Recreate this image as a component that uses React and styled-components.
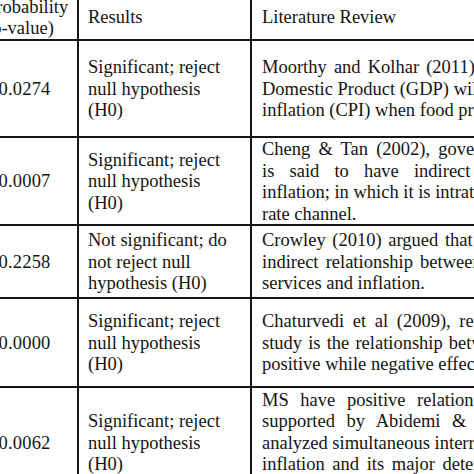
import styled, { createGlobalStyle } from "styled-components";

const Global = createGlobalStyle`
  html, body {
    margin: 0;
    padding: 0;
    background: #ffffff;
    overflow: hidden;
  }
  body {
    width: 474px;
    height: 474px;
  }
`;

const rows = [
  {
    h: 97,
    p: "0.0274",
    result: ["Significant; reject", "null hypothesis", "(H0)"],
    review: [
      ["Moorthy and Kolhar (2011) found that Gross", 2.5],
      ["Domestic Product (GDP) will be affected by", 0],
      ["inflation (CPI) when food prices increase.", 0],
    ],
  },
  {
    h: 88,
    p: "0.0007",
    result: ["Significant; reject", "null hypothesis", "(H0)"],
    review: [
      ["Cheng & Tan (2002), government expenditure", 3.5],
      ["is said to have indirect effect on", 10.5],
      ["inflation; in which it is intratemporal", 0],
      ["rate channel.", 0],
    ],
  },
  {
    h: 73,
    p: "0.2258",
    result: ["Not significant; do", "not reject null", "hypothesis (H0)"],
    review: [
      ["Crowley (2010) argued that there is an", 2],
      ["indirect relationship between government", 2.5],
      ["services and inflation.", 0],
    ],
  },
  {
    h: 89,
    p: "0.0000",
    result: ["Significant; reject", "null hypothesis", "(H0)"],
    review: [
      ["Chaturvedi et al (2009), result of the", 4],
      ["study is the relationship between them is", 1.5],
      ["positive while negative effect on inflation.", 0],
    ],
  },
  {
    h: 111,
    p: "0.0062",
    result: ["Significant; reject", "null hypothesis", "(H0)"],
    review: [
      ["MS have positive relationship with inflation", 7],
      ["supported by Abidemi & Maku (2013) who", 7],
      ["analyzed simultaneous interrelationship of", 0],
      ["inflation and its major determinants in", 3],
      ["Nigeria.", 0],
    ],
  },
];

export default function App() {
  const heights = [46, ...rows.map((r) => r.h)].map((h) => `${h}px`).join(" ");

  return (
    <>
      <Global />
      <Grid style={{ gridTemplateRows: heights }}>
        <Cell $indent={16}>
          <Line>Probability</Line>
          <Line>(p-value)</Line>
        </Cell>
        <Cell>
          <Line>Results</Line>
        </Cell>
        <Cell $last>
          <Line>Literature Review</Line>
        </Cell>

        {rows.map((r) => (
          <Row key={r.p} r={r} />
        ))}
      </Grid>
    </>
  );
}

function Row({ r }) {
  return (
    <>
      <Cell $indent={19}>
        <Line $shift={1}>0{r.p}</Line>
      </Cell>
      <Cell>
        {r.result.map((t) => (
          <Line key={t}>{t}</Line>
        ))}
      </Cell>
      <Cell $last>
        {r.review.map(([t, s]) => (
          <Line key={t} $spread={s}>
            {t}
          </Line>
        ))}
      </Cell>
    </>
  );
}

// -------------------css

const Grid = styled.div`
  display: grid;
  grid-template-columns: 109px 173px 420px;
  margin: -5px 0 0 -30px;
  width: max-content;
  font-family: "Liberation Serif", "Times New Roman", serif;
  font-size: 18.5px;
  line-height: 21.5px;
  color: #141414;
`;

const Cell = styled.div`
  box-sizing: border-box;
  display: flex;
  flex-direction: column;
  justify-content: center;
  padding-left: ${(p) => (p.$indent ? p.$indent : p.$last ? 10 : 9)}px;
  padding-top: 2px;
  border-bottom: 2px solid #151515;
  border-right: ${(p) => (p.$last ? "none" : "2px solid #151515")};
  overflow: hidden;
`;

const Line = styled.div`
  white-space: nowrap;
  word-spacing: ${(p) => p.$spread || 0}px;
  letter-spacing: ${(p) => (p.$shift ? "0.2px" : "0")};
`;
